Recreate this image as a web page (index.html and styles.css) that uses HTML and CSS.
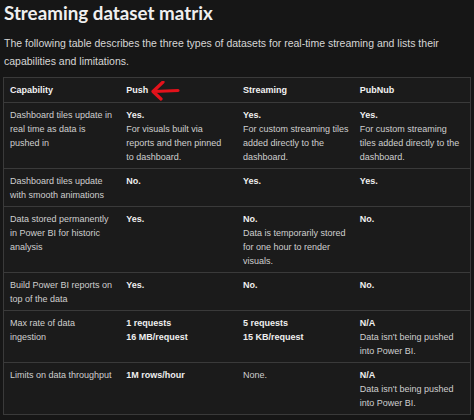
FILE: index.html
```html
<!DOCTYPE html>
<html>
<head>
<meta charset="utf-8">
<link rel="stylesheet" href="styles.css">
</head>
<body>
<h1 class="title">Streaming dataset matrix</h1>
<p class="intro">The following table describes the three types of datasets for real-time streaming and lists their capabilities and limitations.</p>
<table class="matrix">
  <thead>
    <tr>
      <th>Capability</th>
      <th class="push-head">Push
        <svg class="arrow" width="32" height="20" viewBox="0 0 32 20"><path d="M28 9.5 L4 10.5 M13 1 L3 10.5 L11 18" fill="none" stroke="#e3121b" stroke-width="3.2" stroke-linecap="round" stroke-linejoin="round"/></svg>
      </th>
      <th>Streaming</th>
      <th>PubNub</th>
    </tr>
  </thead>
  <tbody>
    <tr>
      <td>Dashboard tiles update in real time as data is pushed in</td>
      <td><b>Yes.</b><br>For visuals built via reports and then pinned to dashboard.</td>
      <td><b>Yes.</b><br><span class="nw">For custom streaming tiles</span> added directly to the dashboard.</td>
      <td><b>Yes.</b><br>For custom streaming tiles added directly to the dashboard.</td>
    </tr>
    <tr>
      <td>Dashboard tiles update with smooth animations</td>
      <td><b>No.</b></td>
      <td><b>Yes.</b></td>
      <td><b>Yes.</b></td>
    </tr>
    <tr>
      <td>Data stored permanently in Power BI for historic analysis</td>
      <td><b>Yes.</b></td>
      <td><b>No.</b><br>Data is temporarily stored for one hour to render visuals.</td>
      <td><b>No.</b></td>
    </tr>
    <tr>
      <td>Build Power BI reports on top of the data</td>
      <td><b>Yes.</b></td>
      <td><b>No.</b></td>
      <td><b>No.</b></td>
    </tr>
    <tr>
      <td>Max rate of data<br>ingestion</td>
      <td><b>1 requests<br>16 MB/request</b></td>
      <td><b>5 requests<br>15 KB/request</b></td>
      <td><b>N/A</b><br>Data isn't being pushed into Power BI.</td>
    </tr>
    <tr>
      <td>Limits on data throughput</td>
      <td><b>1M rows/hour</b></td>
      <td>None.</td>
      <td><b>N/A</b><br>Data isn't being pushed into Power BI.</td>
    </tr>
  </tbody>
</table>
</body>
</html>
```
FILE: styles.css
```css
html, body {
  background: #161616;
}
body {
  margin: 0;
  padding: 0 3px;
  font-family: "Liberation Sans", Arial, sans-serif;
  color: #d2d2d2;
}
.title {
  margin: 0;
  padding-left: 1px;
  font-family: Lato, "Open Sans", sans-serif;
  font-size: 18.8px;
  line-height: 26px;
  font-weight: 700;
  color: #efefef;
}
.intro {
  margin: 8px 0 7px 1px;
  font-size: 10.5px;
  line-height: 18px;
  color: #d6d6d6;
}
.matrix {
  width: 468px;
  table-layout: fixed;
  border-collapse: collapse;
  background: #1b1b1b;
  border: 1px solid #3a3a3a;
  font-size: 9px;
  line-height: 14px;
}
.matrix th, .matrix td {
  text-align: left;
  vertical-align: top;
  padding: 5px 6px 4px;
}
.matrix th {
  font-weight: 700;
  color: #f2f2f2;
  padding: 5px 6px 5px;
  border-bottom: 1px solid #3a3a3a;
}
.matrix td {
  border-top: 1px solid #3a3a3a;
  color: #cfcfcf;
}
.matrix td b {
  color: #efefef;
  font-weight: 700;
}
.nw {
  white-space: nowrap;
}
.push-head {
  position: relative;
}
.arrow {
  position: absolute;
  left: 30px;
  top: 3px;
}
```
